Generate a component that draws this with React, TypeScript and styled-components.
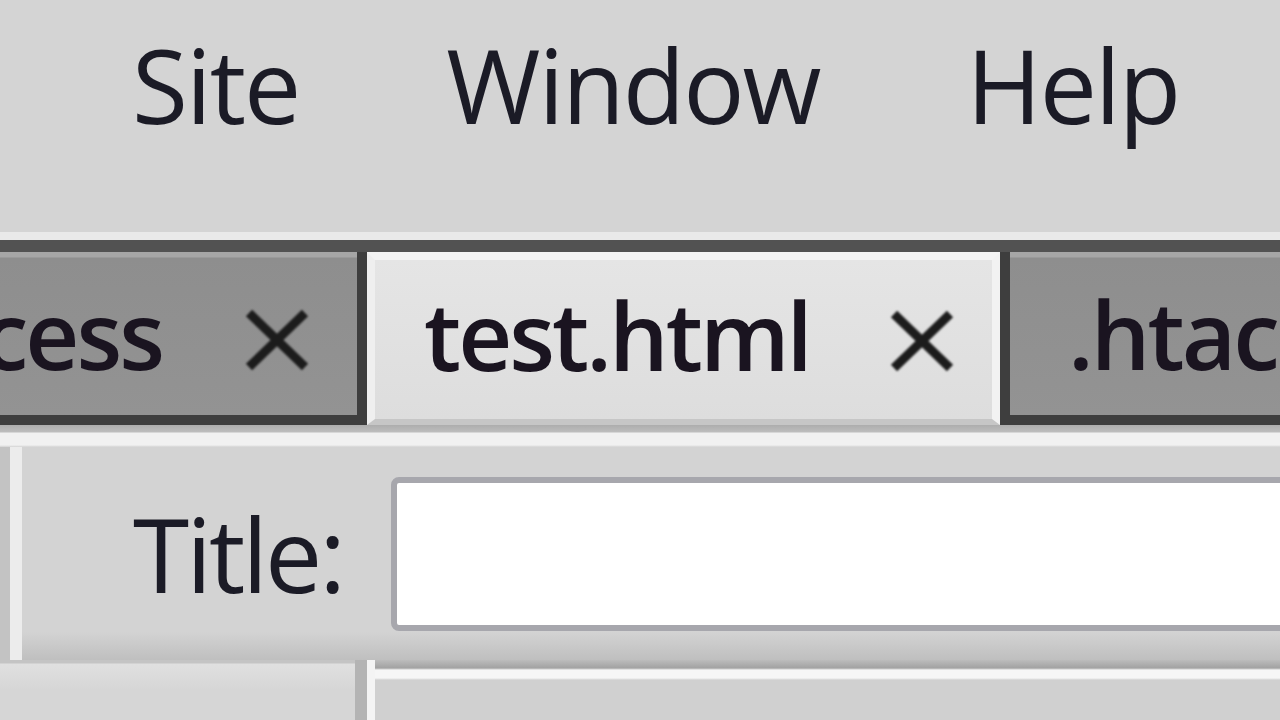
import styled, { createGlobalStyle } from "styled-components";

const GlobalStyle = createGlobalStyle`
  html, body {
    margin: 0;
    padding: 0;
    background: #d3d3d3;
    overflow: hidden;
  }
  body {
    font-family: "Open Sans", "Noto Sans", sans-serif;
    color: #1b1b26;
  }
`;

const Frame = styled.div`
  width: 1280px;
  height: 720px;
  display: flex;
  flex-direction: column;
  overflow: hidden;
  background: #d3d3d3;
`;

const MenuBar = styled.nav`
  flex: none;
  height: 240px;
  box-sizing: border-box;
  display: flex;
  align-items: flex-start;
  gap: 147px;
  padding: 34px 0 0 132px;
  background: #d4d4d4;
  border-bottom: 8px solid #e9e9e9;
`;

const MenuItem = styled.span`
  font-size: 102px;
  line-height: 1;
  font-weight: 500;
  letter-spacing: -2px;
`;

const TabStrip = styled.div`
  flex: none;
  height: 185px;
  box-sizing: border-box;
  display: flex;
  gap: 10px;
  overflow: hidden;
  background: #3e3e3e;
  border-top: 12px solid #525252;
`;

const Tab = styled.div<{ $active?: boolean; $clipLeft?: boolean }>`
  flex: none;
  box-sizing: border-box;
  display: flex;
  align-items: center;
  overflow: hidden;
  white-space: nowrap;
  ${({ $active }) =>
    $active
      ? `
    width: 633px;
    padding: 0 37px 10px 49px;
    background: linear-gradient(#e5e5e5, #dddddd);
    border-top: 8px solid #f4f4f4;
    border-left: 8px solid #efefef;
    border-right: 8px solid #f2f2f2;
    border-bottom: 6px solid #c6c6c6;
  `
      : `
    margin-bottom: 10px;
    padding: 0 47px 0 58px;
    background: linear-gradient(#a6a6a6 0, #a6a6a6 5px, #8e8e8e 6px, #939393 100%);
  `}
  ${({ $clipLeft }) =>
    $clipLeft &&
    `
    width: 357px;
    justify-content: flex-end;
  `}
`;

const TabLabel = styled.span`
  flex: none;
  font-size: 94px;
  line-height: 1;
  font-weight: 600;
  letter-spacing: -3px;
  color: #1a1420;
`;

const CloseIcon = styled.svg<{ $push?: boolean }>`
  flex: none;
  width: 66px;
  height: 62px;
  margin-top: 12px;
  margin-left: ${({ $push }) => ($push ? "auto" : "82px")};
  filter: blur(1.2px);
`;

const Seam = styled.div`
  flex: none;
  height: 22px;
  background: linear-gradient(
    #adadad 0,
    #bdbdbd 7px,
    #f1f1f1 8px,
    #f1f1f1 20px,
    #d3d3d3 22px
  );
`;

const FormPanel = styled.div`
  flex: none;
  height: 213px;
  box-sizing: border-box;
  display: flex;
  align-items: center;
  padding: 0 0 0 133px;
  background: linear-gradient(#d3d3d3 0, #d3d3d3 185px, #bfbfbf 213px);
  box-shadow: inset 10px 0 0 #c3c3c3, inset 22px 0 0 #ececec;
`;

const FieldLabel = styled.label`
  flex: none;
  font-size: 102px;
  line-height: 1;
  font-weight: 500;
  letter-spacing: -3px;
`;

const TextInput = styled.div`
  flex: 1;
  height: 154px;
  box-sizing: border-box;
  margin: 0 -20px 0 48px;
  background: #ffffff;
  border: 6px solid #a7a7ad;
  border-radius: 8px;
`;

const BottomRow = styled.div`
  flex: 1;
  display: flex;
`;

const LeftPane = styled.div`
  width: 355px;
  flex: none;
  background: linear-gradient(#c4c4c4 0, #c4c4c4 3px, #e0e0e0 4px, #d6d6d6 30px);
`;

const Splitter = styled.div`
  width: 20px;
  flex: none;
  background: linear-gradient(to right, #b4b4b4 0, #b4b4b4 12px, #f4f4f4 12px, #f4f4f4 20px);
`;

const RightPane = styled.div`
  flex: 1;
  background: linear-gradient(
    #bcbcbc 0,
    #a2a2a2 8px,
    #f6f6f6 10px,
    #f6f6f6 18px,
    #d0d0d0 20px
  );
`;

const Close = ({ push }: { push?: boolean }) => (
  <CloseIcon $push={push} viewBox="0 0 66 62">
    <path d="M5 4 L61 58 M61 4 L5 58" stroke="#1c1c1c" strokeWidth="9" fill="none" />
  </CloseIcon>
);

const App = () => {
  return (
    <Frame>
      <GlobalStyle />
      <MenuBar>
        <MenuItem>Site</MenuItem>
        <MenuItem>Window</MenuItem>
        <MenuItem>Help</MenuItem>
      </MenuBar>
      <TabStrip>
        <Tab $clipLeft>
          <TabLabel>.htaccess</TabLabel>
          <Close />
        </Tab>
        <Tab $active>
          <TabLabel>test.html</TabLabel>
          <Close push />
        </Tab>
        <Tab>
          <TabLabel>.htaccess</TabLabel>
          <Close />
        </Tab>
      </TabStrip>
      <Seam />
      <FormPanel>
        <FieldLabel>Title:</FieldLabel>
        <TextInput />
      </FormPanel>
      <BottomRow>
        <LeftPane />
        <Splitter />
        <RightPane />
      </BottomRow>
    </Frame>
  );
};

export default App;
